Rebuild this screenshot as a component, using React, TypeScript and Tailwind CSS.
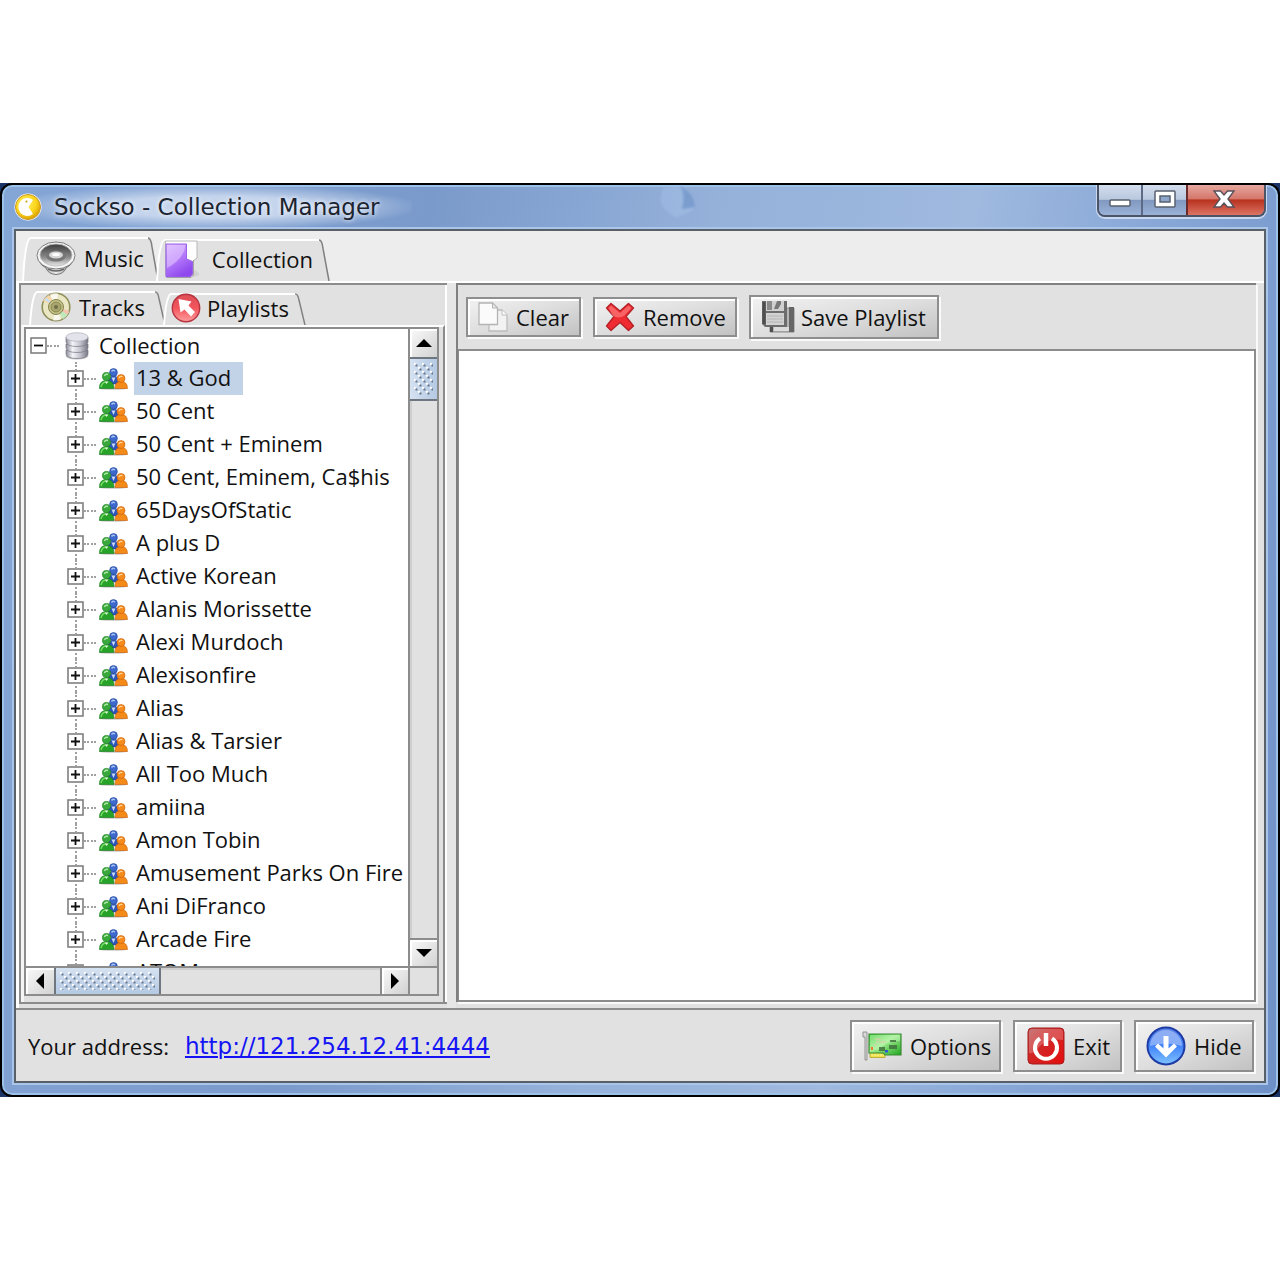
import { useState } from 'react'
import type { ReactNode } from 'react'

const ARTISTS = [
  '13 & God',
  '50 Cent',
  '50 Cent + Eminem',
  '50 Cent, Eminem, Ca$his',
  '65DaysOfStatic',
  'A plus D',
  'Active Korean',
  'Alanis Morissette',
  'Alexi Murdoch',
  'Alexisonfire',
  'Alias',
  'Alias & Tarsier',
  'All Too Much',
  'amiina',
  'Amon Tobin',
  'Amusement Parks On Fire',
  'Ani DiFranco',
  'Arcade Fire',
  'ATOM',
]

function LogoIcon() {
  return (
    <svg className="h-7 w-7 shrink-0" viewBox="0 0 28 28">
      <defs>
        <radialGradient id="logo" cx=".4" cy=".35" r=".7">
          <stop offset="0" stopColor="#fff06a" />
          <stop offset=".6" stopColor="#fbd51c" />
          <stop offset="1" stopColor="#d79a00" />
        </radialGradient>
      </defs>
      <circle cx="14" cy="14" r="13.5" fill="#fff" />
      <circle cx="14" cy="14" r="12.5" fill="url(#logo)" stroke="#c8982a" />
      <path d="M19 7A9 9 0 1 0 19 21L14.500 14Z" fill="#fff" />
      <circle cx="12.500" cy="8.500" r="1.100" fill="#c9a020" />
    </svg>
  )
}

function SpeakerIcon() {
  return (
    <svg className="h-9 w-10 shrink-0" viewBox="0 0 40 36">
      <defs>
        <linearGradient id="spk" x1="0" y1="0" x2="0" y2="1">
          <stop offset="0" stopColor="#3c3c3c" />
          <stop offset=".6" stopColor="#8a8a8a" />
          <stop offset="1" stopColor="#e8e8e8" />
        </linearGradient>
        <linearGradient id="spkBase" x1="0" y1="0" x2="1" y2="0">
          <stop offset="0" stopColor="#777" />
          <stop offset=".5" stopColor="#eee" />
          <stop offset="1" stopColor="#777" />
        </linearGradient>
      </defs>
      <path d="M2 19Q5 26 10 28Q12 34 20 34.500Q28 34 30 28Q35 26 38 19Z" fill="url(#spkBase)" stroke="#777" />
      <path d="M12 29Q20 33 28 29" fill="none" stroke="#666" strokeWidth="1.500" />
      <ellipse cx="20" cy="15.500" rx="19" ry="13.500" fill="#f4f4f4" stroke="#7c7c7c" />
      <ellipse cx="20" cy="15" rx="16" ry="11" fill="url(#spk)" stroke="#bbb" strokeWidth=".8" />
      <ellipse cx="20" cy="16" rx="10" ry="5.500" fill="#777" />
      <ellipse cx="20" cy="15" rx="7" ry="3.500" fill="#d8d8d8" />
      <ellipse cx="20" cy="14.500" rx="4" ry="1.500" fill="#fff" />
    </svg>
  )
}

function FolderIcon() {
  return (
    <svg className="h-10 w-10 shrink-0" viewBox="0 0 40 40">
      <defs>
        <linearGradient id="fold" x1="0" y1="0" x2=".5" y2="1">
          <stop offset="0" stopColor="#dcb8ff" />
          <stop offset=".5" stopColor="#b77dfb" />
          <stop offset="1" stopColor="#8f48ee" />
        </linearGradient>
      </defs>
      <path d="M28 30Q36 33 35 36Q32 38 26 38Z" fill="#d2d2d2" />
      <path d="M1.500 2H33V19L29 22V36H1.500Z" fill="#fdfdfd" stroke="#b8b8b8" />
      <path d="M2 5H22.500V20L28.500 22.500V35L26 38H2Z" fill="url(#fold)" stroke="#9a62e6" />
      <path d="M3 6H21.500Q20 20 3 29Z" fill="#e6ccff" opacity=".55" />
      <path d="M29.500 21V36L27 38.500H3" fill="none" stroke="#999" strokeWidth=".8" />
    </svg>
  )
}

function DiscIcon() {
  return (
    <svg className="h-[30px] w-[30px] shrink-0" viewBox="0 0 30 30">
      <circle cx="15" cy="15" r="13.800" fill="#e9e7c4" stroke="#8f8f59" strokeWidth="1.600" />
      <path d="M15 15L2 9A14 14 0 0 1 8 3Z" fill="#f8d5a8" />
      <path d="M15 15L3.500 8A14 14 0 0 1 5.500 5.500Z" fill="#c5e0f3" />
      <path d="M15 15L28 20A14 14 0 0 1 22 27Z" fill="#bfe8bd" />
      <path d="M15 15L28 19A14 14 0 0 1 26.500 22.500Z" fill="#f7bfae" />
      <path d="M15 15L9 2.500A14 14 0 0 1 17 1.500ZM15 15L20 27.500A14 14 0 0 1 12 28.200Z" fill="#fff" opacity=".75" />
      <circle cx="15" cy="15" r="7.500" fill="#c5c28c" stroke="#85834a" />
      <circle cx="15" cy="15" r="5" fill="#a9a66d" stroke="#8c8950" />
      <circle cx="15" cy="15" r="2" fill="#6f6e48" />
    </svg>
  )
}

function PlaylistIcon() {
  return (
    <svg className="h-[30px] w-[30px] shrink-0" viewBox="0 0 30 30">
      <defs>
        <linearGradient id="pl" x1="0" y1="0" x2="0" y2="1">
          <stop offset="0" stopColor="#dd4d55" />
          <stop offset=".5" stopColor="#f2555c" />
          <stop offset="1" stopColor="#ff9d9d" />
        </linearGradient>
      </defs>
      <circle cx="15" cy="15" r="13.700" fill="url(#pl)" stroke="#b53440" strokeWidth="1.400" />
      <path d="M7.500 6L20.500 8.500L17.500 12.500L24 19L20 23.500L13.500 16.500L9.500 19.500Z" fill="#fff" />
    </svg>
  )
}

function DatabaseIcon() {
  return (
    <svg className="h-7 w-6 shrink-0" viewBox="0 0 24 28">
      <defs>
        <linearGradient id="db" x1="0" y1="0" x2="1" y2="0">
          <stop offset="0" stopColor="#8c8c99" />
          <stop offset=".3" stopColor="#f4f4fa" />
          <stop offset=".65" stopColor="#c3c3cd" />
          <stop offset="1" stopColor="#777783" />
        </linearGradient>
      </defs>
      <ellipse cx="12" cy="24" rx="11.500" ry="3.500" fill="#c4c4c4" />
      <path d="M1 18V22Q2 26.500 12 26.500T23 22V18Z" fill="url(#db)" stroke="#777784" strokeWidth=".7" />
      <path d="M1 12V16Q2 20.500 12 20.500T23 16V12Z" fill="url(#db)" stroke="#777784" strokeWidth=".7" />
      <path d="M1 5V10Q2 14.500 12 14.500T23 10V5Z" fill="url(#db)" stroke="#777784" strokeWidth=".7" />
      <ellipse cx="12" cy="5" rx="11" ry="4.300" fill="#e3e3ec" stroke="#b0b0bc" strokeWidth=".7" />
    </svg>
  )
}

function UsersIcon() {
  return (
    <svg className="h-[22px] w-[29px] shrink-0" viewBox="0 0 29 22">
      <ellipse cx="14" cy="20.500" rx="14" ry="1.300" fill="#c9c9c9" />
      <path d="M9 16Q9 8 14.500 8T20 16Z" fill="#2c55b8" stroke="#20418f" strokeWidth=".6" />
      <circle cx="14.500" cy="4.500" r="3.900" fill="#3d68cc" stroke="#20418f" strokeWidth=".6" />
      <path d="M12.500 3.500Q14 1.500 16 3" stroke="#a9c3f4" strokeWidth="1.400" fill="none" />
      <path d="M12.500 9.500L14.500 14L16.500 9.500Z" fill="#c9d8f6" />
      <path d="M16 20.500Q15.500 13.500 22 13.500T28.500 20.500Z" fill="#f48a18" stroke="#c85c06" strokeWidth=".6" />
      <circle cx="22" cy="10.500" r="4" fill="#f68b1e" stroke="#c85c06" strokeWidth=".6" />
      <path d="M20 10Q21 7.700 23.500 8.700" stroke="#ffd596" strokeWidth="1.400" fill="none" />
      <path d="M.500 20.500Q0 12.500 7.500 12.500T15 20.500Z" fill="#27a329" stroke="#157a1a" strokeWidth=".6" />
      <path d="M2 19Q3 14 7.500 14" stroke="#7ddc6c" strokeWidth="1.400" fill="none" />
      <circle cx="7.500" cy="8.500" r="4.100" fill="#38a83c" stroke="#157a1a" strokeWidth=".6" />
      <path d="M5.300 8Q6.500 5.500 9 6.500" stroke="#b4eaa8" strokeWidth="1.400" fill="none" />
      <path d="M6 13.500L7.500 16L9.500 13.500Z" fill="#e3f5df" />
    </svg>
  )
}

function CopyIcon() {
  return (
    <svg className="h-[30px] w-[30px] shrink-0" viewBox="0 0 30 30">
      <path d="M11 8H24L29 13V29H11Z" fill="#f2f2f2" stroke="#bcbcbc" strokeWidth="1.300" />
      <path d="M24 8V13H29" fill="#fff" stroke="#bcbcbc" />
      <path d="M1 1H14.500L19.500 6V22.500H1Z" fill="#fbfbfb" stroke="#b4b4b4" strokeWidth="1.300" />
      <path d="M14.500 1V6H19.500Z" fill="#e9e9e9" stroke="#b4b4b4" />
    </svg>
  )
}

function RemoveIcon() {
  return (
    <svg className="h-[30px] w-[30px] shrink-0" viewBox="0 0 30 30">
      <path
        d="M6 1.500L15 9L23.500 1.500L28.500 6L21 14.500L28.500 24L23.500 28.500L15 20.500L6 28.500L1.500 24L9 14.500L1.500 6Z"
        fill="#ee2c31"
        stroke="#b32127"
        strokeWidth="1.300"
        strokeLinejoin="round"
      />
      <path d="M6 3.500L15 11L23.500 3.500L26.500 6L19.500 13.500Q14 17 8 14L3.500 6Z" fill="#ff8b8b" opacity=".6" />
    </svg>
  )
}

function SaveIcon() {
  return (
    <svg className="h-[34px] w-[34px] shrink-0" viewBox="0 0 34 34">
      <path d="M9 8H33V32H9Z" fill="#b5b5b5" stroke="#8a8a8a" />
      <path d="M28 7H33V32H28Z" fill="#666" />
      <path d="M9 27H12V32H9Z" fill="#4f4f4f" />
      <path d="M13 27H28V31H13Z" fill="#dcdcdc" />
      <path d="M1 1H26V27H4L1 24Z" fill="#6d6d6d" />
      <path d="M5 1H23V11H5Z" fill="#d0d0d0" />
      <path d="M6 1H11V10H6Z" fill="#8a8a8a" />
      <path d="M16 1H20V4L17 9H13Z" fill="#777" />
      <path d="M5 13H23V25H5Z" fill="#d2d2d2" />
      <path d="M6 16H22M6 19H22M6 22H22" stroke="#b4b4b4" />
      <path d="M1.500 2H4.500V24H1.500Z" fill="#4e4e4e" />
    </svg>
  )
}

function OptionsIcon() {
  return (
    <svg className="h-[30px] w-10 shrink-0" viewBox="0 0 40 30">
      <defs>
        <linearGradient id="pcb" x1="0" y1="0" x2="1" y2="1">
          <stop offset="0" stopColor="#2fc52f" />
          <stop offset=".45" stopColor="#9deb8c" />
          <stop offset="1" stopColor="#1fa51f" />
        </linearGradient>
      </defs>
      <path d="M1 1H5V29H3V6H1Z" fill="#d9d9d9" stroke="#8b8b8b" strokeWidth=".9" />
      <path d="M8 21H23V26.500H8Z" fill="#f0e04c" stroke="#b3a52a" strokeWidth=".8" />
      <path d="M7 3H39V24H23L21 22H7Z" fill="url(#pcb)" stroke="#3b8a35" strokeWidth="1.200" />
      <path d="M8 4H38V10Q24 10 18 18L8 20Z" fill="#d8ffcc" opacity=".4" />
      <path d="M28 9H34V11H28ZM27 14H35V18H27ZM17 16H23V20H17Z" fill="#3f6b3c" opacity=".8" />
      <path d="M13 8H19M14 11H24M12 14H15" stroke="#e6c7b0" strokeWidth="1.200" />
      <path d="M9 16H11V19H9Z" fill="#ee7a2b" />
      <path d="M23 19H26V21.500H23Z" fill="#2a58d8" />
      <path d="M9 24H22" stroke="#fff8a8" strokeDasharray="2 1" />
    </svg>
  )
}

function ExitIcon() {
  return (
    <svg className="h-[38px] w-[38px] shrink-0" viewBox="0 0 38 38">
      <defs>
        <linearGradient id="ex" x1="0" y1="0" x2="1" y2="1">
          <stop offset="0" stopColor="#b65252" />
          <stop offset=".35" stopColor="#cf2a2a" />
          <stop offset="1" stopColor="#e50c0c" />
        </linearGradient>
      </defs>
      <rect x="1" y="1" width="36" height="36" rx="4" fill="url(#ex)" stroke="#a51d1d" />
      <path d="M2 5Q2 2 5 2H33Q36 2 36 5V13Q20 10 10 22Q6 27 2 26Z" fill="#fff" opacity=".22" />
      <path d="M13 11.500A11 11 0 1 0 25 11.500" fill="none" stroke="#fff" strokeWidth="4" />
      <path d="M19 6V19" stroke="#fff" strokeWidth="4.500" />
    </svg>
  )
}

function HideIcon() {
  return (
    <svg className="h-10 w-10 shrink-0" viewBox="0 0 40 40">
      <defs>
        <linearGradient id="hd" x1="0" y1="0" x2="0" y2="1">
          <stop offset="0" stopColor="#5d85e6" />
          <stop offset=".5" stopColor="#4283fa" />
          <stop offset="1" stopColor="#7fc4ff" />
        </linearGradient>
      </defs>
      <circle cx="20" cy="20" r="18.500" fill="url(#hd)" stroke="#1d3aa5" strokeWidth="2" />
      <path d="M4 20A16 16 0 0 1 36 20Q20 15 4 20Z" fill="#c6d7fb" opacity=".5" />
      <path d="M17.500 10H22.500V22.500L28 17.500L31 20.500L20 31.500L9 20.500L12 17.500L17.500 22.500Z" fill="#fff" />
    </svg>
  )
}

type TabProps = { icon: ReactNode; label: string; active: boolean; onSelect: () => void; size: string; gap: string }

// Swing "metal" style tab with slanted sides
function Tab({ icon, label, active, onSelect, size, gap }: TabProps) {
  return (
    <button role="tab" aria-selected={active} onClick={onSelect} className={`flex ${size}`}>
      <svg className="h-full w-2 shrink-0" viewBox="0 0 8 40" preserveAspectRatio="none">
        <path d="M0 40L5 4L8 0V40Z" fill="#e1e1e1" />
        <path d="M1 40Q3 4 8 1" fill="none" stroke="#fff" strokeWidth="2" />
      </svg>
      <span className={`flex h-full items-center border-t-2 border-white bg-[#e1e1e1] pb-1 whitespace-nowrap ${gap}`}>
        {icon}
        {label}
      </span>
      <svg className="h-full w-3 shrink-0" viewBox="0 0 12 40" preserveAspectRatio="none">
        <path d="M0 0L3 2L11 40H0Z" fill="#e1e1e1" />
        <path d="M0 1Q3 1 4 9L10 40" fill="none" stroke="#808080" strokeWidth="1.500" />
      </svg>
    </button>
  )
}

function PushButton({ icon, label, size }: { icon: ReactNode; label: string; size: string }) {
  return (
    <button
      className={`flex items-center border-2 border-[#8e8e8e] bg-linear-to-br from-[#f2f2f2] via-[#dedede] to-[#c2c2c2] whitespace-nowrap shadow-[2px_2px_0_#fafafa,inset_2px_2px_0_#fff] ${size}`}
    >
      {icon}
      {label}
    </button>
  )
}

function Expander({ open }: { open: boolean }) {
  return (
    <button aria-label={open ? 'Collapse' : 'Expand'} className="z-10 h-[17px] w-[17px] shrink-0 bg-white">
      <svg viewBox="0 0 17 17" className="h-full w-full">
        <rect x="1" y="1" width="15" height="15" fill="#fff" stroke="#808080" strokeWidth="1.600" />
        <path d={open ? 'M4 8.500H13' : 'M4 8.500H13M8.500 4V13'} stroke="#111" strokeWidth="1.800" />
      </svg>
    </button>
  )
}

function Grip({ id }: { id: string }) {
  return (
    <svg className="h-full w-full">
      <defs>
        <pattern id={id} width="8" height="8" patternUnits="userSpaceOnUse">
          <path d="M0 0h2v2H0zM4 4h2v2H4z" fill="#fff" />
          <path d="M1.500 1.500h2v2h-2zM5.500 5.500h2v2h-2z" fill="#66758a" />
        </pattern>
      </defs>
      <rect width="100%" height="100%" fill={`url(#${id})`} />
    </svg>
  )
}

function ArrowButton({ d, label, edge }: { d: string; label: string; edge: string }) {
  return (
    <button
      aria-label={label}
      className={`flex h-full w-full items-center justify-center bg-linear-to-br from-[#fafafa] to-[#d2d2d2] shadow-[inset_2px_2px_0_#fff] ${edge}`}
    >
      <svg className="h-4 w-4 shrink-0" viewBox="0 0 16 16">
        <path d={d} fill="#000" />
      </svg>
    </button>
  )
}

function TitleBar() {
  return (
    <header className="flex h-11 shrink-0 items-start">
      <div className="flex h-full items-center gap-3 bg-[radial-gradient(ellipse_at_center,#c4d4ec_35%,transparent_74%)] pr-8">
        <LogoIcon />
        <h1 className="font-['DejaVu_Sans',sans-serif] text-[23px] text-[#1c2430] [text-shadow:0_0_5px_#fff]">
          Sockso - Collection Manager
        </h1>
      </div>
      <svg className="ml-60 h-9 w-12 blur-[1px]" viewBox="0 0 48 36">
        <path d="M12 2Q5 14 12 24L24 33L40 26L43 20L32 1Z" fill="#a3c0e8" opacity=".5" />
        <path d="M28 1Q42 8 43 22L30 24Q34 10 28 1Z" fill="#7397ca" opacity=".8" />
      </svg>
      <div className="ml-auto flex h-8 overflow-hidden rounded-b-lg border-2 border-t-0 border-[#4c5468] shadow-[0_1px_0_1px_#c8d8ee]">
        <button
          aria-label="Minimize"
          className="flex w-11 items-center justify-center border-r-2 border-[#5c6a86] bg-[linear-gradient(#d3deee_0%,#b9c8de_48%,#8097bf_50%,#9cb3d8_100%)]"
        >
          <svg className="h-6 w-6" viewBox="0 0 24 24">
            <rect x="2" y="12" width="20" height="6" rx="1" fill="#fff" stroke="#59616f" strokeWidth="1.500" />
          </svg>
        </button>
        <button
          aria-label="Maximize"
          className="flex w-[45px] items-center justify-center border-r-2 border-[#6b2b2b] bg-[linear-gradient(#d3deee_0%,#b9c8de_48%,#8097bf_50%,#9cb3d8_100%)]"
        >
          <svg className="h-6 w-6" viewBox="0 0 24 24">
            <rect x="2" y="3" width="20" height="16" rx="1" fill="#fff" stroke="#59616f" strokeWidth="1.500" />
            <rect x="7" y="8" width="10" height="6" fill="#8fa6cc" stroke="#59616f" strokeWidth="1.500" />
          </svg>
        </button>
        <button
          aria-label="Close"
          className="flex w-[76px] items-center justify-center bg-[linear-gradient(#e6a89f_0%,#d4766a_46%,#b8321f_50%,#dc7464_100%)] pr-1"
        >
          <svg className="h-6 w-6" viewBox="0 0 24 24">
            <path
              d="M2 3H8.500L12 7L15.500 3H22L16 11L22 19H15.500L12 15L8.500 19H2L8 11Z"
              fill="#fff"
              stroke="#59505c"
              strokeWidth="1.400"
            />
          </svg>
        </button>
      </div>
    </header>
  )
}

function ArtistTree() {
  const [selected, setSelected] = useState(ARTISTS[0])

  return (
    <ul role="tree" className="min-h-0 min-w-0 overflow-hidden bg-white">
      <li role="treeitem" aria-expanded="true">
        <div className="flex h-[33px] items-center pl-1">
          <Expander open />
          <span className="mr-1.5 w-3 border-t-2 border-dotted border-[#a0a0a0]" />
          <DatabaseIcon />
          <span className="pb-0.5 pl-2.5">Collection</span>
        </div>
        <ul role="group">
          {ARTISTS.map(name => (
            <li key={name} role="treeitem" aria-selected={name === selected} className="relative flex h-[33px] items-center pl-[41px]">
              <span className="absolute top-0 left-[49px] h-full border-l-2 border-dotted border-[#a0a0a0]" />
              <Expander open={false} />
              <span className="mr-[3px] w-3 shrink-0 border-t-2 border-dotted border-[#a0a0a0]" />
              <UsersIcon />
              <button
                onClick={() => setSelected(name)}
                className={`ml-1.5 h-[33px] shrink-0 pr-3 pb-1 pl-0.5 whitespace-nowrap ${name === selected ? 'bg-[#c3d3e7]' : ''}`}
              >
                {name}
              </button>
            </li>
          ))}
        </ul>
      </li>
    </ul>
  )
}

function TracksPanel() {
  return (
    <div className="grid min-h-0 flex-1 grid-cols-[minmax(0,1fr)_29px] grid-rows-[minmax(0,1fr)_28px] border-2 border-[#8c8c8c] bg-[#e1e1e1]">
      <ArtistTree />
      <div className="flex flex-col border-l-2 border-[#8c8c8c]">
        <div className="h-7 shrink-0">
          <ArrowButton label="Scroll up" d="M8 4L16 12H0Z" edge="" />
        </div>
        <div className="h-11 shrink-0 border-y-2 border-[#6f7680] bg-linear-to-r from-[#d5e2f2] to-[#b4c9e3] p-1">
          <Grip id="gripV" />
        </div>
        <div className="flex-1 border-l-2 border-[#cfcfcf]" />
        <div className="h-7 shrink-0">
          <ArrowButton label="Scroll down" d="M0 4H16L8 12Z" edge="border-t-2 border-[#8c8c8c]" />
        </div>
      </div>
      <div className="flex border-t-2 border-[#8c8c8c]">
        <div className="w-7 shrink-0">
          <ArrowButton label="Scroll left" d="M4 8L12 0V16Z" edge="" />
        </div>
        <div className="w-[107px] shrink-0 border-x-2 border-[#6f7680] bg-linear-to-b from-[#d5e2f2] to-[#b4c9e3] p-1">
          <Grip id="gripH" />
        </div>
        <div className="flex-1 border-t-2 border-[#cfcfcf]" />
        <div className="w-7 shrink-0">
          <ArrowButton label="Scroll right" d="M12 8L4 0V16Z" edge="border-l-2 border-[#8c8c8c]" />
        </div>
      </div>
      <div className="border-t-2 border-l-2 border-[#8c8c8c]" />
    </div>
  )
}

export default function App() {
  const [mainTab, setMainTab] = useState('Music')
  const [sideTab, setSideTab] = useState('Tracks')

  return (
    <div className="flex h-screen flex-col bg-white py-[183px] font-['Open_Sans','Noto_Sans',sans-serif] text-[22px] leading-7 text-[#111]">
      <div className="flex min-h-0 flex-1 flex-col bg-[#1b3568]">
        <div className="flex min-h-0 flex-1 flex-col rounded-xl border-2 border-black bg-[linear-gradient(100deg,#84a6d6_0%,#7a9acb_30%,#95b1da_50%,#9fb9df_68%,#86a6d6_82%,#6f90c6_100%)] px-3 pb-3 shadow-[inset_0_0_0_2px_#9cc2ea]">
          <TitleBar />
          <div className="flex min-h-0 flex-1 flex-col border-2 border-[#5a6068] bg-[#ededed] shadow-[0_0_0_2px_#a9c6ea]">
            <div role="tablist" className="flex h-[50px] shrink-0 items-end pl-1.5">
              <Tab
                icon={<SpeakerIcon />}
                label="Music"
                active={mainTab === 'Music'}
                onSelect={() => setMainTab('Music')}
                size="h-[44px]"
                gap="gap-2 pl-1.5 pr-1"
              />
              <Tab
                icon={<FolderIcon />}
                label="Collection"
                active={mainTab === 'Collection'}
                onSelect={() => setMainTab('Collection')}
                size="-ml-1 h-[42px]"
                gap="gap-2 pr-1.5"
              />
            </div>
            <div className="flex min-h-0 flex-1 border-t-2 border-l-[3px] border-white bg-[#e1e1e1]">
              <section className="mb-1 flex w-[428px] shrink-0 flex-col border-2 border-r-0 border-[#8c8c8c]">
                <div role="tablist" className="flex h-10 shrink-0 items-end border-r-2 border-white pl-2">
                  <Tab
                    icon={<DiscIcon />}
                    label="Tracks"
                    active={sideTab === 'Tracks'}
                    onSelect={() => setSideTab('Tracks')}
                    size="h-[34px]"
                    gap="gap-2 pl-1 pr-2.5"
                  />
                  <Tab
                    icon={<PlaylistIcon />}
                    label="Playlists"
                    active={sideTab === 'Playlists'}
                    onSelect={() => setSideTab('Playlists')}
                    size="-ml-1 h-8"
                    gap="gap-1.5 pr-1.5"
                  />
                </div>
                <div className="mr-0.5 flex min-h-0 flex-1 flex-col border-t-2 border-r-2 border-l-[3px] border-t-white border-r-[#8c8c8c] border-l-[#f4f4f4] pr-1 pb-1.5 shadow-[2px_0_0_#fff]">
                  <TracksPanel />
                </div>
              </section>
              <div className="w-[9px] shrink-0 bg-[#e6e6e6]" />
              <section className="mr-2 mb-1.5 flex min-w-0 flex-1 flex-col border-t-2 border-l-2 border-[#808080] shadow-[2px_2px_0_#fafafa]">
                <div className="flex h-16 shrink-0 items-center gap-3 pl-2">
                  <PushButton icon={<CopyIcon />} label="Clear" size="h-10 w-[115px] gap-2 pl-2.5" />
                  <PushButton icon={<RemoveIcon />} label="Remove" size="h-10 w-[144px] gap-2 pl-2.5" />
                  <PushButton icon={<SaveIcon />} label="Save Playlist" size="h-11 w-[190px] gap-1.5 pl-2.5" />
                </div>
                <div className="min-h-0 flex-1 border-2 border-l border-[#8c8c8c] bg-white" />
              </section>
            </div>
            <footer className="flex h-[73px] shrink-0 items-center justify-between border-t-2 border-[#8c8c8c] bg-[#e1e1e1] pr-2.5 pl-3">
              <p className="flex items-center gap-4">
                Your address:
                <a
                  href="http://121.254.12.41:4444"
                  className="font-['DejaVu_Sans',sans-serif] text-[23px] text-[#1414f5] underline decoration-2 underline-offset-2"
                >
                  http://121.254.12.41:4444
                </a>
              </p>
              <div className="flex gap-3">
                <PushButton icon={<OptionsIcon />} label="Options" size="h-[52px] w-[151px] gap-2 pl-2.5" />
                <PushButton icon={<ExitIcon />} label="Exit" size="h-[52px] w-[109px] gap-2 pl-3" />
                <PushButton icon={<HideIcon />} label="Hide" size="h-[52px] w-[120px] gap-2 pl-2.5" />
              </div>
            </footer>
          </div>
        </div>
      </div>
    </div>
  )
}
